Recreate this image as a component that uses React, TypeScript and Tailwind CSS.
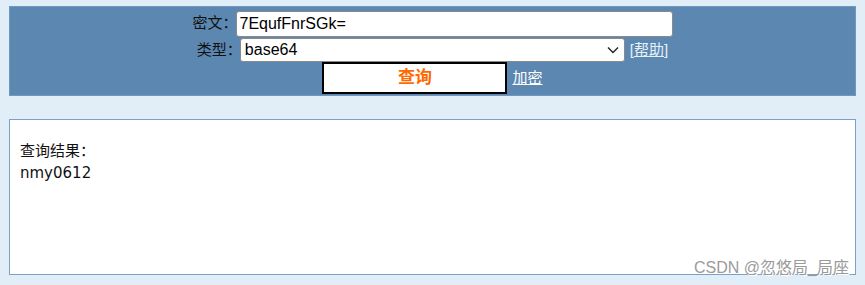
const App = () => {
    return (
        <div className="w-[865px] h-[285px] bg-[#e2eef7] pt-[6px] relative" style={{fontFamily: '"Liberation Sans", "Noto Sans CJK SC", sans-serif'}}>
            <div className="mx-[9px] h-[90px] bg-[#5b87b1] border border-[#6f98c0] pt-[3px] text-[15px] text-[#111]">
                <div className="flex justify-center items-center h-[27px]">
                    <span className="-mr-[2px]">密文：</span>
                    <input
                        className="w-[437px] h-[26px] bg-white border border-[#8a8a8a] rounded-[3px] px-[3px] text-[16px] text-black outline-none"
                        defaultValue="7EqufFnrSGk="
                    />
                </div>
                <div className="flex justify-center items-center h-[24px] mt-[1px]">
                    <span className="-mr-[2px]">类型：</span>
                    <div className="w-[385px] h-[24px] bg-white border border-[#8a8a8a] rounded-[3px] flex items-center justify-between pl-[4px] pr-[5px] text-[16px] text-black">
                        <span>base64</span>
                        <svg width="12" height="8" viewBox="0 0 12 8" fill="none" stroke="#222" strokeWidth="1.4">
                            <path d="M1 1.5 L6 6.5 L11 1.5" />
                        </svg>
                    </div>
                    <span className="ml-[5px] text-[15px] text-[#e8f0f8]">[<a className="underline">帮助</a>]</span>
                </div>
                <div className="flex justify-center items-center h-[32px]">
                    <button className="w-[185px] h-[32px] bg-white border-2 border-black text-[#ff6a00] font-bold text-[17px]">查询</button>
                    <a className="ml-[5px] text-white underline text-[15px]">加密</a>
                </div>
            </div>
            <div className="mx-[9px] mt-[23px] h-[156px] bg-white border border-[#7aa0cc] pt-[20px] px-[10px]">
                <div className="text-[15px] text-[#111] leading-[22px]">查询结果：</div>
                <div className="text-[15px] text-[#111] leading-[22px]" style={{fontFamily: '"DejaVu Sans", sans-serif'}}>nmy0612</div>
            </div>
            <div className="absolute right-[16px] top-[256px] text-[16px] text-[#9a9a9a] [text-shadow:1px_1px_0_#fff]" style={{fontFamily: '"Liberation Sans", "Noto Sans CJK SC", sans-serif'}}>
                CSDN @忽悠局_局座
            </div>
        </div>
    )
}

export default App;
